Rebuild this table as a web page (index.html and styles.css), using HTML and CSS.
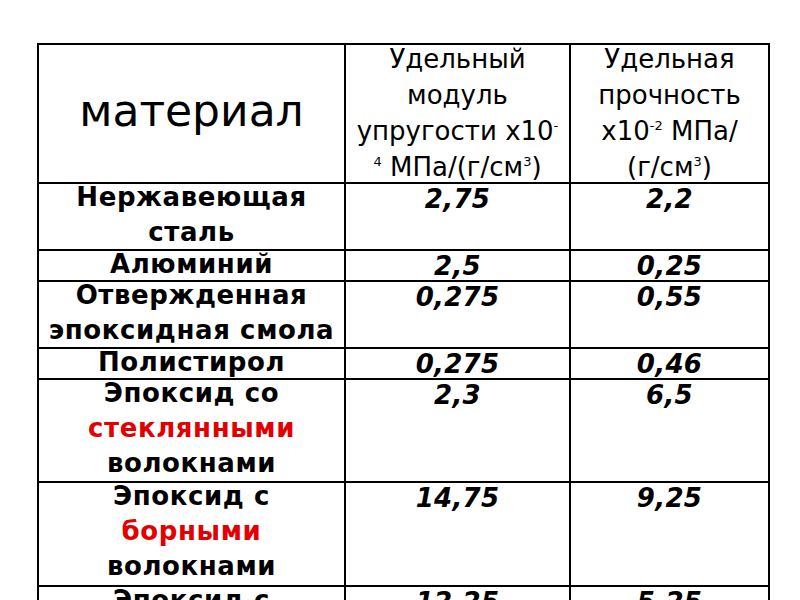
FILE: index.html
```html
<!DOCTYPE html>
<html lang="ru">
<head>
<meta charset="utf-8">
<link rel="stylesheet" href="styles.css">
</head>
<body>
<div class="table">
  <div class="cell head-main"><span>материал</span></div>
  <div class="cell head"><div class="in">Удельный модуль упругости х10<sup>-</sup><br><sup>4</sup> МПа/(г/см<sup>3</sup>)</div></div>
  <div class="cell head"><div class="in">Удельная<br>прочность<br>х10<sup>-2</sup> МПа/<br>(г/см<sup>3</sup>)</div></div>

  <div class="cell name r2"><div class="in">Нержавеющая<br>сталь</div></div>
  <div class="cell num r2"><div class="in">2,75</div></div>
  <div class="cell num r2"><div class="in">2,2</div></div>

  <div class="cell name r1"><div class="in">Алюминий</div></div>
  <div class="cell num r1"><div class="in">2,5</div></div>
  <div class="cell num r1"><div class="in">0,25</div></div>

  <div class="cell name r2"><div class="in">Отвержденная<br>эпоксидная смола</div></div>
  <div class="cell num r2"><div class="in">0,275</div></div>
  <div class="cell num r2"><div class="in">0,55</div></div>

  <div class="cell name r1"><div class="in">Полистирол</div></div>
  <div class="cell num r1"><div class="in">0,275</div></div>
  <div class="cell num r1"><div class="in">0,46</div></div>

  <div class="cell name r3"><div class="in">Эпоксид со<br><span class="red">стеклянными</span><br>волокнами</div></div>
  <div class="cell num r3"><div class="in">2,3</div></div>
  <div class="cell num r3"><div class="in">6,5</div></div>

  <div class="cell name r3b"><div class="in">Эпоксид с<br><span class="red">борными</span><br>волокнами</div></div>
  <div class="cell num r3b"><div class="in">14,75</div></div>
  <div class="cell num r3b"><div class="in">9,25</div></div>

  <div class="cell name r3"><div class="in">Эпоксид с<br><span class="red">углеродными</span><br>волокнами</div></div>
  <div class="cell num r3"><div class="in">12,25</div></div>
  <div class="cell num r3"><div class="in">5,25</div></div>
</div>
</body>
</html>
```

FILE: styles.css
```css
html, body {
  margin: 0;
  padding: 0;
  background: #fff;
  height: 600px;
  overflow: hidden;
}
body {
  font-family: "DejaVu Sans", sans-serif;
  color: #000;
}
.table {
  margin: 43px 0 0 37px;
  width: 733px;
  box-sizing: border-box;
  display: grid;
  grid-template-columns: 305px 223px 197px;
  grid-template-rows: 137px 65px 29px 65px 29px 101px 102px 101px;
  gap: 2px;
  padding: 2px;
  background: #000;
}
.cell {
  background: #fff;
  text-align: center;
  overflow: visible;
  white-space: nowrap;
}
.head-main {
  display: flex;
  align-items: center;
  justify-content: center;
  font-size: 44px;
  padding-bottom: 6px;
  box-sizing: border-box;
}
.head {
  font-size: 26px;
  line-height: 36px;
}
.head .in {
  margin-top: -4px;
}
.head:nth-child(2) {
  white-space: normal;
  padding: 0 4px;
}
sup {
  font-size: 13px;
  line-height: 0;
  vertical-align: 10px;
}
.name {
  font-size: 26px;
  font-weight: bold;
  line-height: 35px;
  letter-spacing: 0.6px;
}
.name .in {
  margin-top: -4px;
}
.num {
  font-size: 26px;
  font-weight: bold;
  font-style: italic;
  line-height: 32px;
  letter-spacing: 0.3px;
}
.num .in {
  margin-top: -1px;
}
.red {
  color: #e30000;
}
```
